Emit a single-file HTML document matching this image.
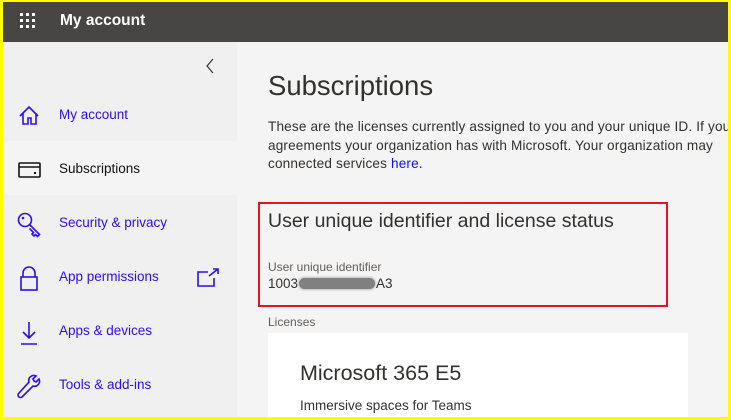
<!DOCTYPE html>
<html><head><style>
*{margin:0;padding:0;box-sizing:border-box}
body{width:731px;height:420px;overflow:hidden;background:#ffff00;font-family:"Liberation Sans",sans-serif;position:relative}
#wrap{position:absolute;left:3px;top:2px;width:725px;height:415px;background:#f4f4f4;overflow:hidden}
#top{position:absolute;left:0;top:0;width:725px;height:40px;background:#484644;color:#fff}
#top .t{position:absolute;left:57px;top:10px;font-size:15.5px;font-weight:bold}
#side{position:absolute;left:0;top:40px;width:234px;height:380px;background:#f0f0f0}
.it{position:absolute;left:0;width:234px;height:54px}
.it span{position:absolute;left:56px;top:20px;font-size:13.5px;color:#2a10f0}
.it svg{position:absolute;left:14px;top:17px}
.abs{position:absolute}
p.d{position:absolute;left:265px;top:116px;font-size:13.6px;letter-spacing:0.15px;line-height:18.5px;color:#323130;white-space:nowrap}
</style></head><body><div id="wrap">
<div id="top">
<svg class="abs" style="left:17px;top:11px" width="16" height="16"><g fill="#fff"><rect x="0" y="0" width="3" height="3"/><rect x="6" y="0" width="3" height="3"/><rect x="12" y="0" width="3" height="3"/><rect x="0" y="6" width="3" height="3"/><rect x="6" y="6" width="3" height="3"/><rect x="12" y="6" width="3" height="3"/><rect x="0" y="12" width="3" height="3"/><rect x="6" y="12" width="3" height="3"/><rect x="12" y="12" width="3" height="3"/></g></svg>
<div class="t">My account</div></div>
<div id="side">
<svg class="abs" style="left:202px;top:16px" width="10" height="16"><path d="M8 1L2 8l6 7" stroke="#333" fill="none" stroke-width="1.2"/></svg>
<div class="it" style="top:45px"><svg width="24" height="24"><path d="M3 12L12 3l9 9M6 9v11h5v-6h3v6h5V9" stroke="#2a10f0" fill="none" stroke-width="1.6"/></svg><span>My account</span></div>
<div class="it" style="top:99px;background:#f4f4f4"><svg width="24" height="24"><rect x="2" y="5" width="21" height="14" rx="1" stroke="#111" fill="none" stroke-width="1.6"/><path d="M2 9h21" stroke="#111" stroke-width="1.6"/><rect x="17" y="14" width="2" height="2" fill="#111"/></svg><span style="color:#111">Subscriptions</span></div>
<div class="it" style="top:153px"><svg width="26" height="26"><circle cx="8" cy="8" r="6.5" stroke="#2a10f0" fill="none" stroke-width="1.6"/><circle cx="6" cy="6" r="1.3" fill="#2a10f0"/><path d="M12.5 12.5l10 10-2 2-2-2-1.5 1.5-2-2 1.5-1.5-4-4" stroke="#2a10f0" fill="none" stroke-width="1.6"/></svg><span>Security &amp; privacy</span></div>
<div class="it" style="top:207px"><svg width="24" height="26"><path d="M6 11V7a6 6 0 0112 0v4" stroke="#2a10f0" fill="none" stroke-width="1.6"/><rect x="4" y="11" width="16" height="13" stroke="#2a10f0" fill="none" stroke-width="1.6"/></svg><span>App permissions</span>
<svg style="left:193px;top:19px" width="24" height="20"><path d="M12 4H2v14h16v-8M13 8l9-7M17 1h5v5" stroke="#2a10f0" fill="none" stroke-width="1.6"/></svg></div>
<div class="it" style="top:261px"><svg width="24" height="26"><path d="M12 2v16M6 12l6 6 6-6M4 24h16" stroke="#2a10f0" fill="none" stroke-width="1.6"/></svg><span>Apps &amp; devices</span></div>
<div class="it" style="top:315px"><svg width="26" height="26"><path d="M3 23l11-11a5 5 0 006-7l-3 3-2-1-1-2 3-3a5 5 0 00-7 6L0 19a2.5 2.5 0 003 4z" stroke="#2a10f0" fill="none" stroke-width="1.6" transform="translate(2,0)"/></svg><span>Tools &amp; add-ins</span></div>
</div>
<div class="abs" style="left:265px;top:68px;font-size:27.5px;color:#323130">Subscriptions</div>
<p class="d">These are the licenses currently assigned to you and your unique ID. If you<br>agreements your organization has with Microsoft. Your organization may<br>connected services <span style="color:#1010f0">here.</span></p>
<div class="abs" style="left:255px;top:200px;width:410px;height:105px;border:2px solid #e81123"></div>
<div class="abs" style="left:265px;top:208px;font-size:19.5px;color:#323130">User unique identifier and license status</div>
<div class="abs" style="left:265px;top:258px;font-size:12px;color:#605e5c">User unique identifier</div>
<div class="abs" style="left:265px;top:274px;font-size:13.5px;color:#323130">1003<span style="display:inline-block;width:76px;height:11px;border-radius:6px;background:#808080;box-shadow:0 0 2px 1px #bbb;margin:0 1px;vertical-align:-1px"></span>A3</div>
<div class="abs" style="left:265px;top:313px;font-size:12px;color:#605e5c">Licenses</div>
<div class="abs" style="left:265px;top:331px;width:420px;height:100px;background:#fff">
<div class="abs" style="left:32px;top:28px;font-size:21.5px;color:#323130">Microsoft 365 E5</div>
<div class="abs" style="left:32px;top:65px;font-size:13.5px;color:#323130">Immersive spaces for Teams</div>
</div>
</div></body></html>
